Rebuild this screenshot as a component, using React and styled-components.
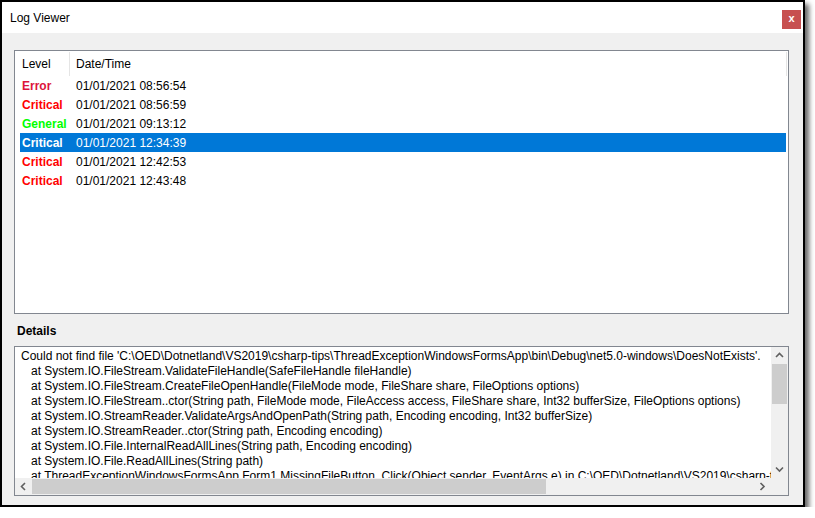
import styled, { createGlobalStyle } from 'styled-components'

const GlobalStyle = createGlobalStyle`
  html, body {
    margin: 0;
    padding: 0;
    background: #ffffff;
  }
  body {
    font-family: "Liberation Sans", Arial, sans-serif;
    font-size: 12px;
  }
`

const rows = [
  { level: 'Error', time: '01/01/2021 08:56:54', color: '#dc143c' },
  { level: 'Critical', time: '01/01/2021 08:56:59', color: '#ff0000' },
  { level: 'General', time: '01/01/2021 09:13:12', color: '#00ff00' },
  { level: 'Critical', time: '01/01/2021 12:34:39', color: '#ff0000', selected: true },
  { level: 'Critical', time: '01/01/2021 12:42:53', color: '#ff0000' },
  { level: 'Critical', time: '01/01/2021 12:43:48', color: '#ff0000' },
]

const details = [
  "Could not find file 'C:\\OED\\Dotnetland\\VS2019\\csharp-tips\\ThreadExceptionWindowsFormsApp\\bin\\Debug\\net5.0-windows\\DoesNotExists'.",
  '   at System.IO.FileStream.ValidateFileHandle(SafeFileHandle fileHandle)',
  '   at System.IO.FileStream.CreateFileOpenHandle(FileMode mode, FileShare share, FileOptions options)',
  '   at System.IO.FileStream..ctor(String path, FileMode mode, FileAccess access, FileShare share, Int32 bufferSize, FileOptions options)',
  '   at System.IO.StreamReader.ValidateArgsAndOpenPath(String path, Encoding encoding, Int32 bufferSize)',
  '   at System.IO.StreamReader..ctor(String path, Encoding encoding)',
  '   at System.IO.File.InternalReadAllLines(String path, Encoding encoding)',
  '   at System.IO.File.ReadAllLines(String path)',
  '   at ThreadExceptionWindowsFormsApp.Form1.MissingFileButton_Click(Object sender, EventArgs e) in C:\\OED\\Dotnetland\\VS2019\\csharp-tips\\ThreadExceptionWindowsFormsApp\\Form1.cs:line 42',
]

const Chevron = ({ dir }) => {
  const paths = {
    up: 'M1 5 L4.5 1.5 L8 5',
    down: 'M1 1.5 L4.5 5 L8 1.5',
    left: 'M5 1 L1.5 4.5 L5 8',
    right: 'M1.5 1 L5 4.5 L1.5 8',
  }
  const vertical = dir === 'up' || dir === 'down'
  return (
    <svg width={vertical ? 9 : 7} height={vertical ? 7 : 9} viewBox={vertical ? '0 0 9 7' : '0 0 7 9'}>
      <path d={paths[dir]} fill="none" stroke="#606060" strokeWidth="1.6" />
    </svg>
  )
}

const App = () => {
  return (
    <>
      <GlobalStyle />
      <Window>
        <TitleBar>
          <Title>Log Viewer</Title>
          <CloseButton>x</CloseButton>
        </TitleBar>
        <Body>
          <ListView>
            <HeaderRow>
              <HeaderCell $width={55}>Level</HeaderCell>
              <HeaderCell $grow>Date/Time</HeaderCell>
            </HeaderRow>
            {rows.map((r, i) => (
              <Row key={i} $selected={r.selected}>
                <LevelCell style={{ color: r.selected ? '#ffffff' : r.color }}>{r.level}</LevelCell>
                <TimeCell>{r.time}</TimeCell>
              </Row>
            ))}
          </ListView>
          <SectionLabel>Details</SectionLabel>
          <TextBox>
            <TextArea>
              {details.map((line, i) => (
                <Line key={i}>{line}</Line>
              ))}
            </TextArea>
            <VScroll>
              <ArrowBox><Chevron dir="up" /></ArrowBox>
              <VTrack>
                <VThumb />
              </VTrack>
              <ArrowBox><Chevron dir="down" /></ArrowBox>
            </VScroll>
            <HScroll>
              <ArrowBox><Chevron dir="left" /></ArrowBox>
              <HTrack>
                <HThumb />
              </HTrack>
              <ArrowBox><Chevron dir="right" /></ArrowBox>
            </HScroll>
            <Corner />
          </TextBox>
        </Body>
      </Window>
    </>
  )
}

const Window = styled.div`
  width: 805px;
  height: 507px;
  box-sizing: border-box;
  border: 2px solid #000000;
  background: #f0f0f0;
  display: flex;
  flex-direction: column;
  box-shadow: 4px 4px 5px rgba(0, 0, 0, 0.6);
`

const TitleBar = styled.div`
  flex: none;
  height: 31px;
  background: #ffffff;
  display: flex;
  align-items: center;
  justify-content: space-between;
  padding: 0 2px 0 8px;
`

const Title = styled.div`
  color: #000000;
  font-size: 12px;
  margin-top: 1px;
`

const CloseButton = styled.div`
  width: 19px;
  height: 19px;
  background: #c75050;
  color: #ffffff;
  font-weight: bold;
  font-size: 11px;
  line-height: 16px;
  text-align: center;
  align-self: flex-start;
  margin-top: 8px;
`

const Body = styled.div`
  flex: 1;
  min-height: 0;
  display: flex;
  flex-direction: column;
  padding: 17px 14px 9px 12px;
`

const ListView = styled.div`
  flex: none;
  height: 264px;
  box-sizing: border-box;
  border: 1px solid #828790;
  background: #ffffff;
  display: flex;
  flex-direction: column;
`

const HeaderRow = styled.div`
  display: flex;
  height: 24px;
  align-items: stretch;
  margin-top: 1px;
`

const HeaderCell = styled.div`
  width: ${p => (p.$grow ? 'auto' : `${p.$width}px`)};
  flex: ${p => (p.$grow ? 1 : 'none')};
  display: flex;
  align-items: center;
  padding-left: ${p => (p.$grow ? '6px' : '7px')};
  border-right: 1px solid #e5e5e5;
  color: #000000;
  box-sizing: border-box;
  margin-right: ${p => (p.$grow ? '1px' : '0')};
`

const Row = styled.div`
  display: flex;
  height: 19px;
  align-items: center;
  margin: 0 2px 0 5px;
  background: ${p => (p.$selected ? '#0078d7' : 'transparent')};
  color: ${p => (p.$selected ? '#ffffff' : '#000000')};
`

const LevelCell = styled.div`
  width: 54px;
  padding-left: 2px;
  font-weight: bold;
`

const TimeCell = styled.div`
  flex: 1;
`

const SectionLabel = styled.div`
  flex: none;
  font-weight: bold;
  color: #000000;
  margin: 10px 0 0 3px;
  height: 22px;
  line-height: 14px;
`

const TextBox = styled.div`
  flex: 1;
  box-sizing: border-box;
  border: 1px solid #828790;
  background: #ffffff;
  display: grid;
  grid-template-columns: 1fr 17px;
  grid-template-rows: 1fr 17px;
  overflow: hidden;
  min-height: 0;
`

const TextArea = styled.div`
  overflow: hidden;
  padding: 2px 0 0 6px;
  min-width: 0;
  min-height: 0;
`

const Line = styled.div`
  white-space: pre;
  height: 15px;
  line-height: 15px;
  color: #000000;
`

const VScroll = styled.div`
  background: #f0f0f0;
  display: flex;
  flex-direction: column;
  min-height: 0;
`

const HScroll = styled.div`
  background: #f0f0f0;
  display: flex;
`

const ArrowBox = styled.div`
  width: 17px;
  height: 17px;
  flex: none;
  display: flex;
  align-items: center;
  justify-content: center;
`

const VTrack = styled.div`
  flex: 1;
  padding: 0 1px;
`

const VThumb = styled.div`
  height: 40px;
  background: #cdcdcd;
`

const HTrack = styled.div`
  flex: 1;
  padding: 1px 0;
`

const HThumb = styled.div`
  width: 514px;
  height: 100%;
  background: #cdcdcd;
`

const Corner = styled.div`
  background: #f0f0f0;
`

export default App
